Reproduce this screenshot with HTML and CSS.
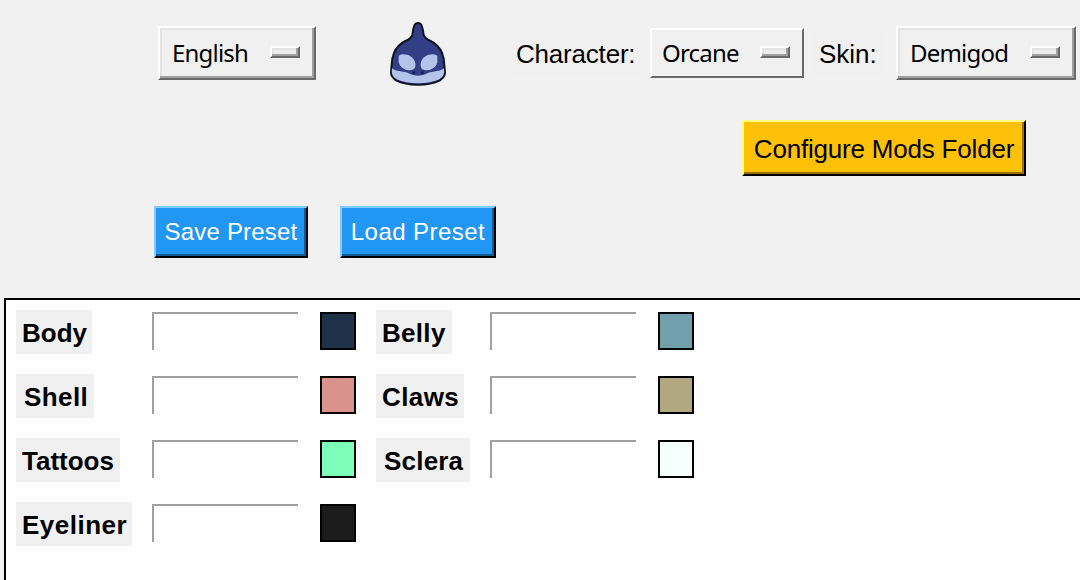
FILE: index.html
```html
<!DOCTYPE html>
<html lang="en">
<head>
    <meta charset="UTF-8">
    <meta name="viewport" content="width=device-width, initial-scale=1.0">
    <title>Orcane - Demigod</title>
    <link rel="stylesheet" href="styles.css">
</head>
<body>
    <div class="toolbar">
        <button class="dropdown language"><span>English</span><i class="indicator"></i></button>
        <svg class="character-icon" viewBox="12 11 168 192">
            <path d="M86 19 Q90 14 96 14 Q102 14 106 19 L110 32 L113 50 Q118 62 134 68 Q158 80 168 104 Q174 118 175 140 L177 162 Q177 176 162 186 Q136 199 96 199 Q56 199 30 186 Q15 176 15 162 L17 140 Q18 118 24 104 Q34 80 58 68 Q74 62 79 50 L82 32 Z" fill="#323f87" stroke="#10131f" stroke-width="6"/>
            <path d="M18 150 Q28 158 50 160 Q64 161 74 168 Q96 176 118 168 Q128 161 142 160 Q164 158 174 150 Q178 174 160 183 Q134 195 96 195 Q58 195 32 183 Q14 174 18 150 Z" fill="#b3c4ea"/>
            <path d="M38 112 Q48 105 64 109 Q80 114 87 130 Q91 146 83 153 Q70 159 56 153 Q42 147 38 132 Z" fill="#b3c4ea"/>
            <path d="M154 112 Q144 105 128 109 Q112 114 105 130 Q101 146 109 153 Q122 159 136 153 Q150 147 154 132 Z" fill="#b3c4ea"/>
            <path d="M78 159 h9 v8 h-9 z M105 159 h9 v8 h-9 z" fill="#1d2450"/>
        </svg>
        <label class="caption character">Character:</label>
        <button class="dropdown flat"><span>Orcane</span><i class="indicator"></i></button>
        <label class="caption skin">Skin:</label>
        <button class="dropdown variant"><span>Demigod</span><i class="indicator"></i></button>
    </div>

    <div class="folder-row">
        <button class="btn configure">Configure Mods Folder</button>
    </div>

    <div class="preset-row">
        <button class="btn preset save">Save Preset</button>
        <button class="btn preset load">Load Preset</button>
    </div>

    <div class="colors">
        <div class="cell"><label class="name body">Body</label></div>
        <input type="text" class="entry">
        <button class="swatch navy"></button>
        <div class="cell"><label class="name belly">Belly</label></div>
        <input type="text" class="entry">
        <button class="swatch teal"></button>

        <div class="cell"><label class="name shell">Shell</label></div>
        <input type="text" class="entry">
        <button class="swatch pink"></button>
        <div class="cell"><label class="name claws">Claws</label></div>
        <input type="text" class="entry">
        <button class="swatch sand"></button>

        <div class="cell"><label class="name tattoos">Tattoos</label></div>
        <input type="text" class="entry">
        <button class="swatch mint"></button>
        <div class="cell"><label class="name sclera">Sclera</label></div>
        <input type="text" class="entry">
        <button class="swatch white"></button>

        <div class="cell"><label class="name eyeliner">Eyeliner</label></div>
        <input type="text" class="entry">
        <button class="swatch black"></button>
    </div>
</body>
</html>
```
FILE: styles.css
```css
* {
    margin: 0;
    padding: 0;
    box-sizing: border-box;
}

body {
    height: 580px;
    overflow: hidden;
    background-color: #f1f1f1;
    color: #000;
    font-family: "Liberation Sans", Arial, sans-serif;
    font-size: 26px;
}

button,
input {
    border-radius: 0;
    font-family: inherit;
    outline: none;
}

/* Top bar */
.toolbar {
    display: flex;
    align-items: center;
    height: 106px;
    padding-left: 158px;
}

.dropdown {
    display: flex;
    flex-shrink: 0;
    justify-content: space-between;
    align-items: center;
    height: 54px;
    padding: 0 14px 0 12px;
    background-color: #f0f0f0;
    border: 2px solid;
    border-color: #fff #696969 #696969 #fff;
    box-shadow: inset -2px -2px #a0a0a0, inset 2px 2px #e3e3e3;
    color: #000;
    font-family: "Noto Sans", sans-serif;
    font-size: 24px;
    letter-spacing: -0.8px;
    line-height: 32px;
}

.dropdown.flat {
    width: 154px;
    height: 50px;
    padding: 0 12px 0 10px;
    box-shadow: none;
}

.language {
    width: 158px;
}

.variant {
    width: 180px;
}

.indicator {
    width: 30px;
    height: 12px;
    margin-bottom: 2px;
    background-color: #ececec;
    border: 2px solid;
    border-color: #fff #696969 #696969 #fff;
    box-shadow: inset -2px -2px #a0a0a0, inset 2px 2px #e3e3e3;
}

.character-icon {
    flex-shrink: 0;
    width: 56px;
    height: 64px;
    margin: 2px 65px 0 74px;
}

.caption {
    flex-shrink: 0;
    height: 44px;
    padding-left: 5px;
    background-color: #f0f0f0;
    line-height: 47px;
}

.caption.character {
    width: 130px;
    margin-right: 9px;
    letter-spacing: -0.2px;
}

.caption.skin {
    width: 71px;
    margin: 0 12px 0 9px;
    padding-left: 6px;
}

/* Buttons */
.btn {
    border: 2px solid;
    white-space: nowrap;
}

.folder-row {
    display: flex;
    height: 100px;
    padding: 14px 0 0 742px;
}

.configure {
    width: 284px;
    height: 56px;
    padding-top: 2px;
    background-color: #ffc107;
    border-color: #ffff7c #000 #000 #ffff7c;
    box-shadow: inset -2px -2px #997404;
    color: #000;
    font-size: 26px;
    letter-spacing: -0.2px;
}

.preset-row {
    display: flex;
    gap: 32px;
    height: 92px;
    padding-left: 154px;
}

.preset {
    height: 52px;
    background-color: #2196f3;
    border-color: #84ccff #000 #000 #84ccff;
    box-shadow: inset -2px -2px #145a92;
    color: #fff;
    font-size: 24px;
    letter-spacing: 0.2px;
}

.save {
    width: 154px;
}

.load {
    width: 156px;
    letter-spacing: 0.45px;
}

/* Color table */
.colors {
    display: grid;
    grid-template-columns: 136px 168px 56px 114px 168px 36px;
    grid-auto-rows: 64px;
    width: 1100px;
    height: 300px;
    margin-left: 4px;
    padding: 10px 0 0 10px;
    background-color: #fff;
    border: 2px solid #000;
}

.name {
    display: block;
    width: 76px;
    height: 44px;
    padding-left: 6px;
    background-color: #f0f0f0;
    font-weight: bold;
    line-height: 47px;
    white-space: nowrap;
}

.belly {
    letter-spacing: 0.3px;
}

.shell {
    width: 78px;
    padding-left: 8px;
    letter-spacing: 0.4px;
}

.claws {
    width: 88px;
    letter-spacing: 0.4px;
}

.tattoos {
    width: 104px;
}

.sclera {
    width: 94px;
    padding-left: 8px;
    letter-spacing: 0.2px;
}

.eyeliner {
    width: 116px;
    letter-spacing: 0.5px;
}

.entry {
    width: 146px;
    height: 38px;
    margin-top: 2px;
    background-color: #fff;
    border: solid #a0a0a0;
    border-width: 2px 0 0 2px;
    font-size: 24px;
}

.swatch {
    width: 36px;
    height: 38px;
    margin-top: 2px;
    border: 2px solid #000;
}

.navy { background-color: #1e334a; }
.teal { background-color: #729fac; }
.pink { background-color: #d9938c; }
.sand { background-color: #b1a881; }
.mint { background-color: #7dffb9; }
.white { background-color: #f5fffc; }
.black { background-color: #1c1c1c; }
```
